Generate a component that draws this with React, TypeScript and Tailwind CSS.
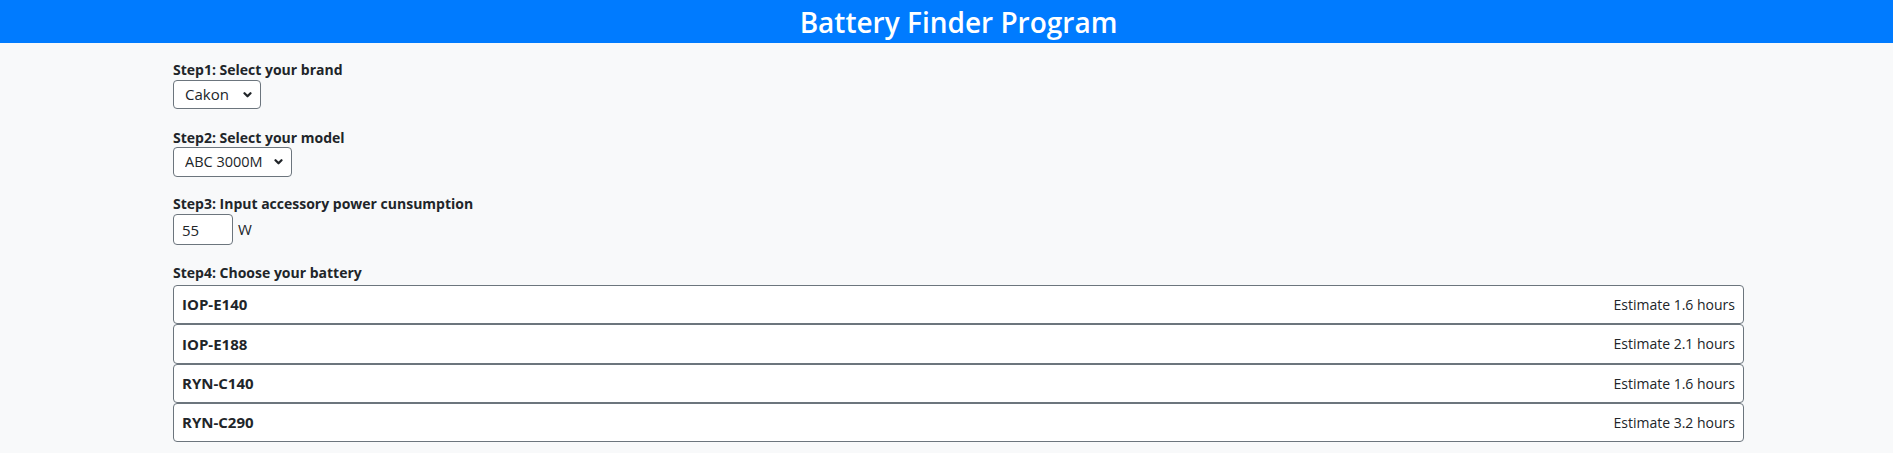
import React, { useState } from 'react';

const batteries = [
  { name: 'IOP-E140', hours: '1.6' },
  { name: 'IOP-E188', hours: '2.1' },
  { name: 'RYN-C140', hours: '1.6' },
  { name: 'RYN-C290', hours: '3.2' },
];

const Chevron = () => (
  <svg
    className="pointer-events-none absolute top-1/2 -translate-y-1/2 right-[9px] w-[9px] h-[6px]"
    viewBox="0 0 10 7"
    fill="none"
    stroke="#212529"
    strokeWidth="2.6"
    strokeLinecap="round"
    strokeLinejoin="round">
    <path d="M1.5 1.5 5 5 8.5 1.5" />
  </svg>
);

const App = () => {
  const [brand, setBrand] = useState('Cakon');
  const [model, setModel] = useState('ABC 3000M');
  const [watts, setWatts] = useState('55');

  return (
    <div className="min-h-[453px] bg-[#f8f9fa] text-[#212529] font-['Open_Sans',sans-serif]">
      <header className="h-[43px] bg-[#007bff] flex items-center justify-center pl-[24px]">
        <h1 className="text-white text-[28px] font-semibold leading-none">Battery Finder Program</h1>
      </header>

      <main className="ml-[173px] w-[1571px] pt-[16px]">
        <div className="text-[14px] font-bold leading-[22px]">Step1: Select your brand</div>
        <div className="relative w-[88px] h-[29px] -mt-[1px]">
          <select
            value={brand}
            onChange={(e) => setBrand(e.target.value)}
            className="appearance-none w-full h-full bg-white border border-[#6c757d] rounded-[4px] pl-[11px] text-[15px] outline-none">
            <option>Cakon</option>
            <option>Nikan</option>
          </select>
          <Chevron />
        </div>

        <div className="text-[14px] font-bold leading-[22px] mt-[18px]">Step2: Select your model</div>
        <div className="relative w-[119px] h-[30px] -mt-[2px]">
          <select
            value={model}
            onChange={(e) => setModel(e.target.value)}
            className="appearance-none w-full h-full bg-white border border-[#6c757d] rounded-[4px] pl-[11px] text-[14.5px] outline-none">
            <option>ABC 3000M</option>
            <option>ABC 2000M</option>
          </select>
          <Chevron />
        </div>

        <div className="text-[14px] font-bold leading-[22px] mt-[16px]">Step3: Input accessory power cunsumption</div>
        <div className="flex items-center gap-[5px] -mt-[1px]">
          <input
            value={watts}
            onChange={(e) => setWatts(e.target.value)}
            className="w-[60px] h-[31px] bg-white border border-[#6c757d] rounded-[4px] px-[8px] text-[15px] outline-none" />
          <span className="text-[15px]">W</span>
        </div>

        <div className="text-[14px] font-bold leading-[22px] mt-[17px]">Step4: Choose your battery</div>
        <div className="mt-[1px]">
          {batteries.map((b) =>
          <div
            key={b.name}
            className="h-[39.25px] bg-white border border-[#6c757d] rounded-[4px] px-[8px] flex items-center justify-between">
              <span className="text-[15px] font-bold">{b.name}</span>
              <span className="text-[14px]">Estimate {b.hours} hours</span>
            </div>
          )}
        </div>
      </main>
    </div>);

};

export default App;
